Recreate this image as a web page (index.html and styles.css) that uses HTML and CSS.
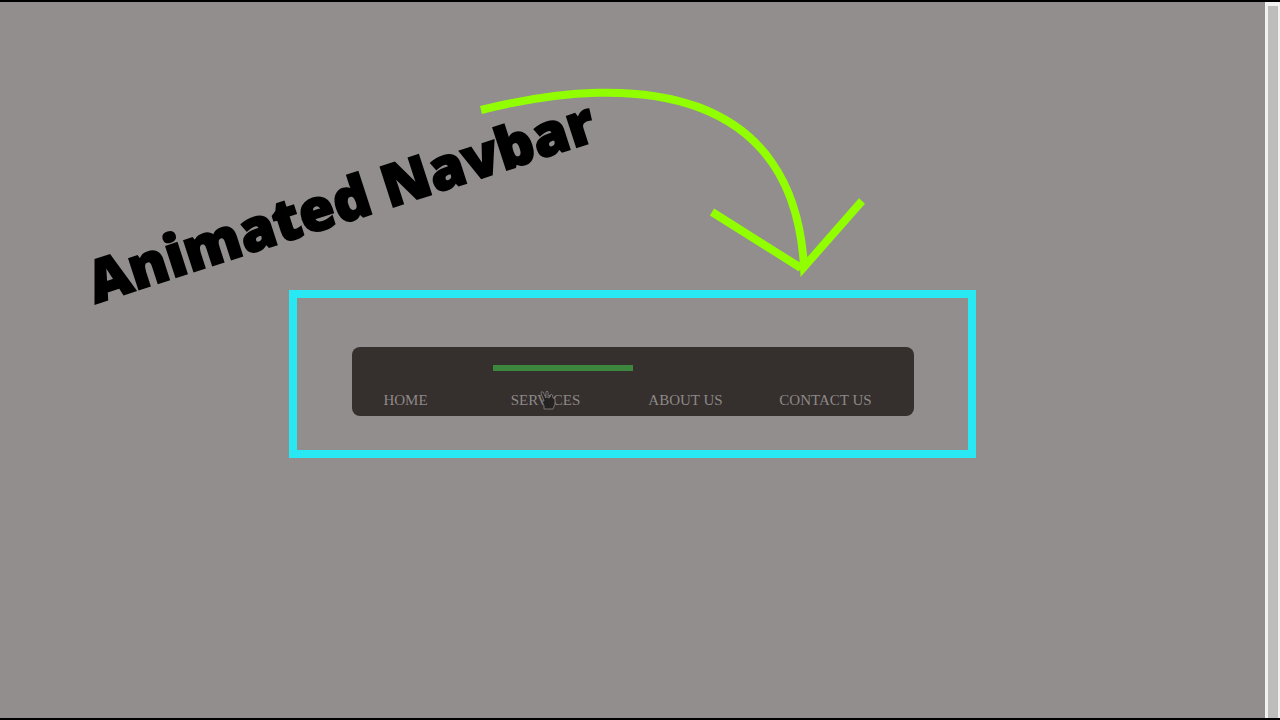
FILE: index.html
```html
<!DOCTYPE html>
<html lang="en">
<head>
<meta charset="utf-8">
<meta name="viewport" content="width=device-width, initial-scale=1">
<title>Animated Navbar</title>
<link rel="stylesheet" href="styles.css">
</head>
<body>
<main class="stage">
  <div class="demo">
    <h1 class="title">Animated Navbar</h1>
    <svg class="arrow" viewBox="474 80 400 200" aria-hidden="true">
      <path d="M481 110C640 70 794 90 804 267L862 201M712 212L801 268"/>
    </svg>
    <div class="frame">
      <nav class="navbar">
        <a class="item" href="#home">HOME</a>
        <a class="item active" href="#services">SERVICES</a>
        <a class="item" href="#about">ABOUT US</a>
        <a class="item" href="#contact">CONTACT US</a>
      </nav>
    </div>
    <svg class="cursor" viewBox="0 0 18 22" aria-hidden="true">
      <path d="M5 12L2 4Q2 2 4 3L7 9V3Q8 1 9 3V9L11 8L12 5Q14 5 14 9L16 10V15L14 20H5V17L3 12Z"/>
    </svg>
  </div>
</main>
<div class="scrollbar" aria-hidden="true"><div class="thumb"></div></div>
</body>
</html>
```
FILE: styles.css
```css
* { box-sizing: border-box; }

body {
  margin: 0;
  min-height: 100vh;
  display: flex;
  border-top: 2px solid #000;
  border-bottom: 2px solid #000;
  background: #928e8d;
  font-family: "Liberation Serif", serif;
  overflow: hidden;
}

.stage {
  flex: 1;
  display: flex;
  align-items: center;
  justify-content: center;
  padding-top: 28px;
}

.demo { position: relative; }

.frame {
  padding: 49px 54px 34px 55px;
  border: 8px solid #28e8f4;
}

.navbar {
  display: grid;
  grid-template-columns: repeat(4, minmax(140px, 1fr));
  padding: 18px 1px 4px;
  border-radius: 8px;
  background: #352f2e;
}

.item {
  padding: 20px 35px 3px 0;
  border-top: 6px solid transparent;
  color: #8d8987;
  font-size: 15px;
  line-height: 18px;
  text-align: center;
  text-decoration: none;
  white-space: nowrap;
}

.item.active { border-top-color: #3d863d; }

/* annotations drawn over the demo */
.title {
  position: absolute;
  left: -191px;
  bottom: 147px;
  margin: 0;
  color: #000;
  font: 800 58px/60px "Open Sans", sans-serif;
  white-space: nowrap;
  -webkit-text-stroke: 2px #000;
  stroke-linejoin: round;
  transform: rotate(-18deg);
  transform-origin: 0 100%;
}

.arrow {
  position: absolute;
  left: 185px;
  top: -210px;
  width: 400px;
  height: 200px;
  fill: none;
  stroke: #91ff00;
  stroke-width: 8px;
  stroke-miterlimit: 10;
}

.cursor {
  position: absolute;
  left: 250px;
  top: 99px;
  width: 18px;
  height: 22px;
  fill: #252322;
  stroke: #777371;
  stroke-width: 1px;
}

.scrollbar {
  width: 15px;
  padding: 4px 2px 0 3px;
  display: flex;
  background: #f2f2f1;
}

.thumb {
  flex: 1;
  background: #bdbdbc;
}
```
